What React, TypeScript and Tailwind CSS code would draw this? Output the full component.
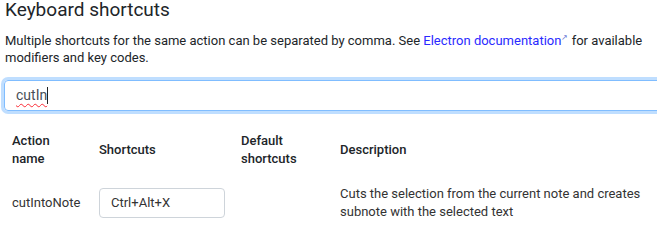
export default function App() {
  return (
    <div className="w-[657px] h-[231px] overflow-hidden bg-white text-[#212529] font-['Roboto',sans-serif]">
      <div className="pl-[5px] pt-0">
        <h4 className="text-[19px] leading-[19px] font-normal mb-[13px]">Keyboard shortcuts</h4>
        <p className="text-[13px] leading-[17px] mb-[14px]">
          Multiple shortcuts for the same action can be separated by comma. See{' '}
          <a className="text-[#2a2aff]" href="#">
            Electron documentation<sup className="text-[8px] text-[#6b7bd6] -top-[5px]">↗</sup>
          </a>{' '}
          for available modifiers and key codes.
        </p>
      </div>
      <div className="ml-[4px] w-[700px] h-[31px] border border-[#80bdff] rounded-[4px] shadow-[0_0_0_3px_rgba(0,123,255,0.25)] flex items-center pl-[11px] text-[14px] text-[#495057]">
        <span className="underline decoration-wavy decoration-red-500 decoration-1 underline-offset-[3px]">cutIn</span>
        <span className="w-px h-[17px] bg-[#222]" />
      </div>
      <table className="mt-[21px] ml-[4px] text-[13px] border-collapse">
        <thead>
          <tr className="text-[#212529]">
            <th className="w-[87px] text-left align-middle px-[8px] leading-[18px] font-medium">Action<br />name</th>
            <th className="w-[141px] text-left align-middle px-[8px] font-medium">Shortcuts</th>
            <th className="w-[99px] text-left align-middle px-[8px] leading-[18px] font-medium">Default<br />shortcuts</th>
            <th className="w-[320px] text-left align-middle px-[8px] font-medium">Description</th>
          </tr>
        </thead>
        <tbody>
          <tr>
            <td className="px-[8px] pt-[17px] align-middle text-[#333]">cutIntoNote</td>
            <td className="px-[8px] pt-[17px] align-middle">
              <div className="w-[126px] h-[30px] border border-[#ced4da] rounded-[4px] flex items-center pl-[11px] text-[13px] text-[#333]">Ctrl+Alt+X</div>
            </td>
            <td className="px-[8px] pt-[17px]" />
            <td className="px-[8px] pt-[17px] align-middle leading-[18px] text-[#333]">
              Cuts the selection from the current note and creates subnote with the selected text
            </td>
          </tr>
        </tbody>
      </table>
    </div>
  )
}
